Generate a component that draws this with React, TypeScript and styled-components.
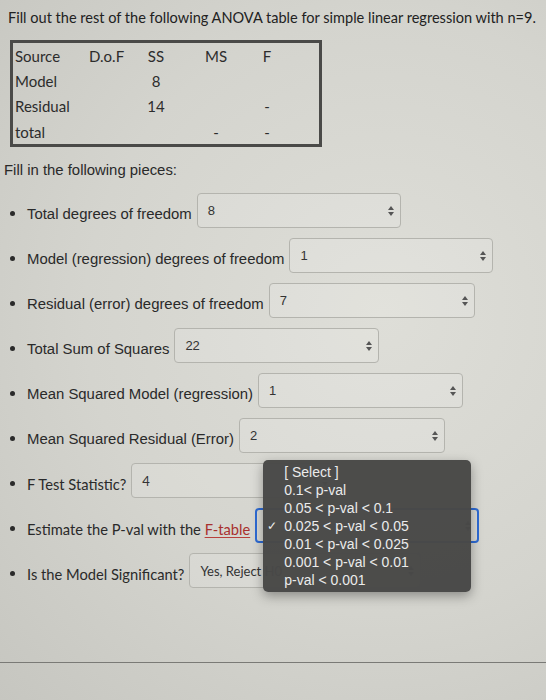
import React from 'react';
import styled, { createGlobalStyle } from 'styled-components';

const GlobalStyle = createGlobalStyle`
  html, body {
    margin: 0;
    padding: 0;
  }
  body {
    background: #d3d3cd;
    font-family: 'Liberation Sans', Arial, sans-serif;
    color: #2a2a2a;
  }
`;

const Page = styled.div`
  position: relative;
  width: 546px;
  height: 700px;
  overflow: hidden;
  background: radial-gradient(ellipse at 70% 45%, #deded8 0%, #d4d4ce 55%, #c6c6c0 100%);
`;

const Title = styled.div`
  padding: 8px 0 0 8px;
  font-family: Lato, 'Liberation Sans', sans-serif;
  font-size: 14.55px;
  line-height: 20px;
  color: #222;
  white-space: nowrap;
`;

const AnovaBox = styled.div`
  box-sizing: border-box;
  width: 312px;
  margin: 12px 0 0 10px;
  border: 3px solid #4a4a48;
  padding-left: 2px;
  font-family: Lato, 'Liberation Sans', sans-serif;
  font-size: 15px;
  color: #2c2c2c;
`;

const AnovaRow = styled.div`
  display: grid;
  grid-template-columns: 74px 41px 52px 68px 34px;
  height: 25.3px;
  align-items: center;
`;

const Cell = styled.div<{ $center?: boolean }>`
  text-align: ${({ $center }) => ($center ? 'center' : 'left')};
`;

const SubHeading = styled.div`
  margin: 14px 0 0 4px;
  font-size: 14.9px;
  line-height: 18px;
`;

const List = styled.div`
  margin-top: 14px;
`;

const Row = styled.div`
  display: flex;
  align-items: center;
  height: 35px;
  margin-bottom: 10px;
`;

const LabelGroup = styled.div<{ $lato?: boolean }>`
  display: flex;
  align-items: center;
  margin-top: 6px;
  font-family: ${({ $lato }) => ($lato ? "Lato, 'Liberation Sans', sans-serif" : "'Liberation Sans', Arial, sans-serif")};
  font-size: ${({ $lato }) => ($lato ? '14.7px' : '14.9px')};
  color: #2a2a2a;
  white-space: nowrap;
`;

const Bullet = styled.span`
  width: 5px;
  height: 5px;
  border-radius: 50%;
  background: #2a2a2a;
  margin: 0 12px 0 10px;
`;

const TableLink = styled.span`
  color: #a8302e;
  text-decoration: underline;
  text-decoration-color: #b8403c;
  text-underline-offset: 2px;
`;

const FakeSelect = styled.div<{ $width: number; $focused?: boolean; $lato?: boolean }>`
  position: relative;
  box-sizing: border-box;
  width: ${({ $width }) => $width}px;
  height: 35px;
  margin-left: 5px;
  display: flex;
  align-items: center;
  padding-left: 10px;
  border: ${({ $focused }) => ($focused ? '2px solid #2e6bd4' : '1px solid #b4b4ae')};
  border-radius: 4px;
  background: rgba(255, 255, 255, 0.12);
  font-family: ${({ $lato }) => ($lato ? "Lato, 'Liberation Sans', sans-serif" : "'Liberation Sans', Arial, sans-serif")};
  font-size: 13px;
  color: #333;
  white-space: nowrap;
`;

const Arrows = styled.svg`
  position: absolute;
  right: 6px;
  top: 50%;
  margin-top: -5px;
`;

const Menu = styled.div`
  position: absolute;
  z-index: 10;
  left: 6px;
  top: -50px;
  width: 208px;
  box-sizing: border-box;
  padding: 3px 0;
  background: rgba(72, 72, 71, 0.98);
  border-radius: 5px;
  box-shadow: 0 4px 12px rgba(0, 0, 0, 0.35);
  font-family: 'Liberation Sans', Arial, sans-serif;
  font-size: 14px;
  color: #ebebeb;
`;

const MenuItem = styled.div`
  position: relative;
  height: 18px;
  line-height: 18px;
  padding-left: 21px;
`;

const Check = styled.span`
  position: absolute;
  left: 4px;
  top: 0;
  font-size: 12px;
`;

const Divider = styled.div`
  margin-top: 74px;
  height: 1px;
  background: #7a7a76;
`;

function SelectArrows() {
  return (
    <Arrows width="6" height="10" viewBox="0 0 6 10">
      <path d="M3 0 L6 4 L0 4 Z" fill="#555" />
      <path d="M3 10 L6 6 L0 6 Z" fill="#555" />
    </Arrows>
  );
}

const anova = [
  ['Source', 'D.o.F', 'SS', 'MS', 'F'],
  ['Model', '', '8', '', ''],
  ['Residual', '', '14', '', '-'],
  ['total', '', '', '-', '-'],
];

const numberRows = [
  { label: 'Total degrees of freedom', value: '8', width: 204 },
  { label: 'Model (regression) degrees of freedom', value: '1', width: 204 },
  { label: 'Residual (error) degrees of freedom', value: '7', width: 206 },
  { label: 'Total Sum of Squares', value: '22', width: 205 },
  { label: 'Mean Squared Model (regression)', value: '1', width: 205 },
  { label: 'Mean Squared Residual (Error)', value: '2', width: 206 },
];

const pvalOptions = [
  '[ Select ]',
  '0.1< p-val',
  '0.05 < p-val < 0.1',
  '0.025 < p-val < 0.05',
  '0.01 < p-val < 0.025',
  '0.001 < p-val < 0.01',
  'p-val < 0.001',
];

export default function App() {
  return (
    <Page>
      <GlobalStyle />
      <Title>Fill out the rest of the following ANOVA table for simple linear regression with n=9.</Title>

      <AnovaBox>
        {anova.map((row, i) => (
          <AnovaRow key={i}>
            {row.map((cell, j) => (
              <Cell key={j} $center={j > 1}>
                {cell}
              </Cell>
            ))}
          </AnovaRow>
        ))}
      </AnovaBox>

      <SubHeading>Fill in the following pieces:</SubHeading>

      <List>
        {numberRows.map((r) => (
          <Row key={r.label}>
            <LabelGroup>
              <Bullet />
              {r.label}
            </LabelGroup>
            <FakeSelect $width={r.width}>
              {r.value}
              <SelectArrows />
            </FakeSelect>
          </Row>
        ))}

        <Row>
          <LabelGroup $lato>
            <Bullet />
            F Test Statistic?
          </LabelGroup>
          <FakeSelect $width={204} $lato>
            4
            <SelectArrows />
          </FakeSelect>
        </Row>

        <Row>
          <LabelGroup $lato>
            <Bullet />
            Estimate the P-val with the&nbsp;<TableLink>F-table</TableLink>
          </LabelGroup>
          <FakeSelect $width={224} $focused>
            <SelectArrows />
            <Menu>
              {pvalOptions.map((o) => (
                <MenuItem key={o}>
                  {o === '0.025 < p-val < 0.05' && <Check>✓</Check>}
                  {o}
                </MenuItem>
              ))}
            </Menu>
          </FakeSelect>
        </Row>

        <Row>
          <LabelGroup $lato>
            <Bullet />
            Is the Model Significant?
          </LabelGroup>
          <FakeSelect $width={232} $lato>
            Yes, Reject H0
            <SelectArrows />
          </FakeSelect>
        </Row>
      </List>

      <Divider />
    </Page>
  );
}
